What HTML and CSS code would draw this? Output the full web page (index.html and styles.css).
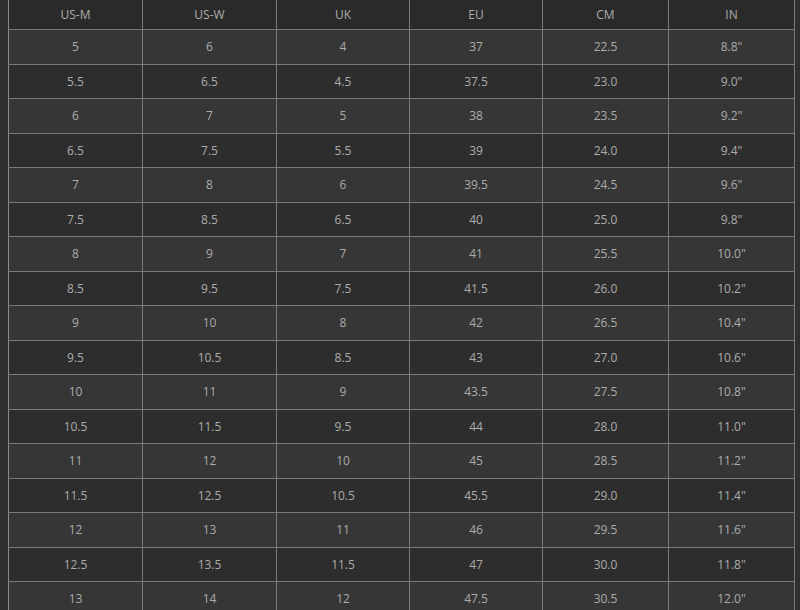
FILE: index.html
```html
<!DOCTYPE html>
<html>
<head>
<meta charset="utf-8">
<link rel="stylesheet" href="styles.css">
</head>
<body>
<table class="size-table">
  <colgroup>
    <col class="c1"><col class="c2"><col class="c3"><col class="c4"><col class="c5"><col class="c6">
  </colgroup>
  <thead>
    <tr><th>US-M</th><th>US-W</th><th>UK</th><th>EU</th><th>CM</th><th>IN</th></tr>
  </thead>
  <tbody>
    <tr><td>5</td><td>6</td><td>4</td><td>37</td><td>22.5</td><td>8.8"</td></tr>
    <tr><td>5.5</td><td>6.5</td><td>4.5</td><td>37.5</td><td>23.0</td><td>9.0"</td></tr>
    <tr><td>6</td><td>7</td><td>5</td><td>38</td><td>23.5</td><td>9.2"</td></tr>
    <tr><td>6.5</td><td>7.5</td><td>5.5</td><td>39</td><td>24.0</td><td>9.4"</td></tr>
    <tr><td>7</td><td>8</td><td>6</td><td>39.5</td><td>24.5</td><td>9.6"</td></tr>
    <tr><td>7.5</td><td>8.5</td><td>6.5</td><td>40</td><td>25.0</td><td>9.8"</td></tr>
    <tr><td>8</td><td>9</td><td>7</td><td>41</td><td>25.5</td><td>10.0"</td></tr>
    <tr><td>8.5</td><td>9.5</td><td>7.5</td><td>41.5</td><td>26.0</td><td>10.2"</td></tr>
    <tr><td>9</td><td>10</td><td>8</td><td>42</td><td>26.5</td><td>10.4"</td></tr>
    <tr><td>9.5</td><td>10.5</td><td>8.5</td><td>43</td><td>27.0</td><td>10.6"</td></tr>
    <tr><td>10</td><td>11</td><td>9</td><td>43.5</td><td>27.5</td><td>10.8"</td></tr>
    <tr><td>10.5</td><td>11.5</td><td>9.5</td><td>44</td><td>28.0</td><td>11.0"</td></tr>
    <tr><td>11</td><td>12</td><td>10</td><td>45</td><td>28.5</td><td>11.2"</td></tr>
    <tr><td>11.5</td><td>12.5</td><td>10.5</td><td>45.5</td><td>29.0</td><td>11.4"</td></tr>
    <tr><td>12</td><td>13</td><td>11</td><td>46</td><td>29.5</td><td>11.6"</td></tr>
    <tr><td>12.5</td><td>13.5</td><td>11.5</td><td>47</td><td>30.0</td><td>11.8"</td></tr>
    <tr><td>13</td><td>14</td><td>12</td><td>47.5</td><td>30.5</td><td>12.0"</td></tr>
  </tbody>
</table>
</body>
</html>
```
FILE: styles.css
```css
html, body {
  background: #2f2f2f;
}
body {
  margin: 0 0 0 8px;
  font-family: "Open Sans", "Noto Sans", sans-serif;
  font-size: 12px;
  color: #acacac;
  overflow: hidden;
}
.size-table {
  border-collapse: collapse;
  table-layout: fixed;
  width: 786px;
  border-left: 1px solid #4a4a4a;
}
.c1 { width: 134px; }
.c2 { width: 134px; }
.c3 { width: 133px; }
.c4 { width: 133px; }
.c5 { width: 126px; }
.c6 { width: 126px; }
.size-table th,
.size-table td {
  text-align: center;
  padding: 0;
  border: 1px solid #7a7a7a;
  font-weight: normal;
}
.size-table thead th {
  border-top: none;
  height: 29px;
  background: #2a2a2a;
  color: #acacac;
}
.size-table tbody td {
  height: 33.5px;
}
.size-table tbody tr:nth-child(odd) td {
  background: #363636;
}
.size-table tbody tr:nth-child(even) td {
  background: #2d2d2d;
}
.size-table th:first-child,
.size-table td:first-child {
  border-left: 1px solid #8a8a8a;
}
```
